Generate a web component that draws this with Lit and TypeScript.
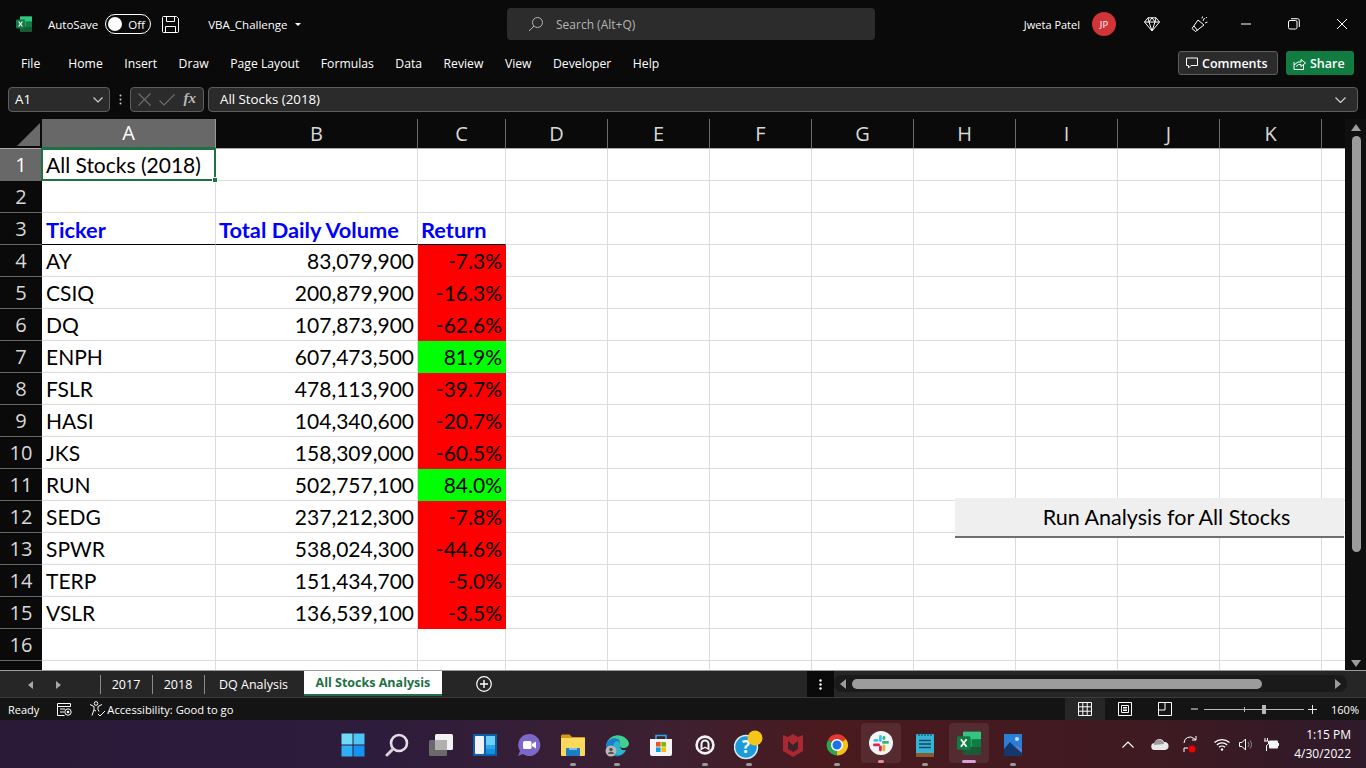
import { LitElement, html, css } from "lit";
import { customElement } from "lit/decorators.js";

const COLS = [
  ["A", 174], ["B", 202], ["C", 88], ["D", 102], ["E", 102], ["F", 102],
  ["G", 102], ["H", 102], ["I", 102], ["J", 102], ["K", 102], ["", 24],
] as const;

const ROWS: [string, string, string, "r" | "g"][] = [
  ["AY", "83,079,900", "-7.3%", "r"],
  ["CSIQ", "200,879,900", "-16.3%", "r"],
  ["DQ", "107,873,900", "-62.6%", "r"],
  ["ENPH", "607,473,500", "81.9%", "g"],
  ["FSLR", "478,113,900", "-39.7%", "r"],
  ["HASI", "104,340,600", "-20.7%", "r"],
  ["JKS", "158,309,000", "-60.5%", "r"],
  ["RUN", "502,757,100", "84.0%", "g"],
  ["SEDG", "237,212,300", "-7.8%", "r"],
  ["SPWR", "538,024,300", "-44.6%", "r"],
  ["TERP", "151,434,700", "-5.0%", "r"],
  ["VSLR", "136,539,100", "-3.5%", "r"],
];

const stroke = (w = 1) => `fill:none;stroke:currentColor;stroke-width:${w}`;

@customElement("app-root")
export class AppRoot extends LitElement {
  static styles = css`
    :host { display: block; width: 1366px; height: 768px; overflow: hidden; background: #0a0a0a; color: #fff; font-family: "Open Sans", "Noto Sans", sans-serif; }
    * { box-sizing: border-box; }
    svg { display: block; flex: none; }
    .title { height: 48px; display: flex; align-items: center; font-size: 11.5px; position: relative; }
    .autosave { margin-left: 16px; }
    .toggle { width: 46px; height: 20px; margin-left: 7px; border: 1px solid #fff; border-radius: 10px; display: flex; align-items: center; padding-left: 2px; gap: 6px; font-size: 11.5px; }
    .knob { width: 14px; height: 14px; border-radius: 50%; background: #fff; }
    .save { margin-left: 11px; }
    .docname { margin-left: 29px; display: flex; align-items: center; gap: 7px; }
    .caret { width: 0; height: 0; border: 3px solid transparent; border-top: 3px solid #fff; border-bottom: 0; }
    .search { position: absolute; left: 507px; top: 8px; width: 368px; height: 32px; background: #2c2c2c; border-radius: 4px; display: flex; align-items: center; padding-left: 21px; gap: 12px; color: #b4b4b4; font-size: 12px; }
    .title-right { margin-left: auto; display: flex; align-items: center; }
    .user { font-size: 11px; margin-right: 12px; }
    .avatar { width: 24px; height: 24px; border-radius: 50%; background: #d13438; font-size: 9.5px; display: flex; align-items: center; justify-content: center; margin-right: 28px; }
    .tr-ic { margin-right: 31px; }
    .tr-ic.last { margin-right: 30px; }
    .winbtns { display: flex; align-items: center; gap: 36px; margin-right: 18px; margin-left: 2px; }
    .ribbon { height: 30px; display: flex; align-items: center; font-size: 12.2px; padding-left: 21px; }
    .ribbon span { margin-right: 21.5px; }
    .ribbon .file { margin-right: 28px; }
    .ribbon-right { margin-left: auto; display: flex; gap: 8px; padding-right: 12px; }
    .rbtn { height: 24px; border-radius: 3px; display: flex; align-items: center; gap: 4px; font-size: 12.5px; font-weight: 600; }
    .rbtn span { margin: 0; }
    .comments { width: 100px; background: #2b2b2b; border: 1px solid #5e5e5e; padding-left: 7px; }
    .share { width: 68px; background: #107c41; padding-left: 7px; }
    .fbar { height: 25px; margin-top: 9px; display: flex; align-items: stretch; padding-left: 8px; font-size: 13.3px; margin-bottom: 7px; }
    .box { background: #2b2b2b; border: 1px solid #5e5e5e; border-radius: 4px; display: flex; align-items: center; }
    .box > span { padding-bottom: 2px; }
    .namebox { width: 102px; padding: 0 6px; justify-content: space-between; font-size: 13.3px; }
    .kebab { width: 20px; display: flex; align-items: center; justify-content: center; }
    .fx { width: 74px; padding: 0 7px; justify-content: space-between; color: #6e6e6e; }
    .fxlabel { font-family: "Liberation Serif", serif; font-style: italic; font-weight: 700; font-size: 15px; color: #b8b8b8; }
    .formula { margin-left: 4px; width: 1150px; padding: 0 11px; justify-content: space-between; }
    .sheetwrap { height: 552px; display: flex; border-bottom: 1px solid #9a9a9a; }
    .sheet { width: 1345px; overflow: hidden; position: relative; height: 551px; }
    .hdr { display: flex; height: 30px; background: #0a0a0a; border-bottom: 1px solid #a8a8a8; }
    .corner { width: 42px; flex: none; padding: 4px 0 0 17px; }
    .ch { flex: none; display: flex; align-items: center; justify-content: center; font-size: 20px; color: #d8d8d8; border-right: 1px solid #6a6a6a; padding-bottom: 1px; }
    .ch.sel { background: #686868; color: #fff; border-bottom: 2px solid #1e7145; margin-bottom: -1px; border-right-color: #9a9a9a; }
    .row { display: flex; height: 32px; }
    .rh { width: 42px; flex: none; background: #0a0a0a; color: #d8d8d8; font-size: 20px; display: flex; align-items: center; justify-content: center; border-bottom: 1px solid #666; }
    .rh.sel { background: #686868; color: #fff; }
    .cell { flex: none; background: #fff; border-right: 1px solid #dcdcdc; border-bottom: 1px solid #dcdcdc; color: #000; font-family: "Lato", "Liberation Sans", sans-serif; font-size: 21px; display: flex; align-items: center; padding: 0 3px; white-space: nowrap; position: relative; }
    .first { padding-left: 4px; }
    .num { justify-content: flex-end; }
    .head { color: #0000ff; font-weight: 700; font-size: 21.8px; border-bottom-color: #000; padding-top: 1px; }
    .red { background: #ff0000; border-color: #ff0000; }
    .green { background: #00ff00; border-color: #00ff00; }
    .selbox { position: absolute; z-index: 2; left: -1px; top: -1px; right: -1px; bottom: -1px; border: 2px solid #1e7145; }
    .handle { position: absolute; right: -4px; bottom: -4px; width: 6px; height: 6px; background: #1e7145; border: 1px solid #fff; box-sizing: content-box; width: 4px; height: 4px; }
    .shape { position: absolute; left: 955px; top: 379px; width: 389px; height: 40px; background: #efefef; border-bottom: 2px solid #6e6e6e; color: #000; font-family: "Lato", sans-serif; font-size: 21.5px; display: flex; align-items: center; justify-content: center; padding-left: 34px; z-index: 3; }
    .vscroll { width: 21px; background: #0f0f0f; display: flex; flex-direction: column; align-items: center; position: relative; }
    .thumbv { width: 9px; height: 416px; background: #9c9c9c; border-radius: 5px; margin-top: 5px; margin-left: 1px; }
    .arr { margin-top: 5px; }
    .arrd { margin-top: auto; margin-bottom: 3px; }
    .tabs { height: 27px; background: #262626; display: flex; align-items: stretch; font-size: 12.5px; border-bottom: 1px solid #3c3c3c; }
    .nav { width: 101px; display: flex; align-items: center; padding-left: 28px; gap: 23px; border-right: 1px solid #8a8a8a; margin: 4px 0 3px; flex: none; }
    .tab { display: flex; align-items: center; position: relative; }
    .tab.year { width: 52px; justify-content: center; padding-right: 2px; }
    .tab.sep::after { content: ""; position: absolute; right: 0; top: 4px; bottom: 3px; width: 1px; background: #8a8a8a; }
    .tab.dq { padding: 0 16px 0 14px; }
    .tab.active { background: #fff; color: #1e7145; font-weight: 700; padding: 0 11.500px; border-bottom: 2px solid #1e7145; margin-bottom: 1px; }
    .plus { margin-left: 34px; align-self: center; }
    .hwrap { margin-left: 315px; width: 27px; background: #0a0a0a; display: flex; align-items: center; justify-content: center; flex: none; }
    .htrack { flex: 1; margin: 4px 19px 5px 0; background: #1a1a1a; border-radius: 8px; display: flex; align-items: center; padding: 0 6px; }
    .thumbh { width: 410px; height: 10px; border-radius: 5px; background: #9c9c9c; margin-left: 6px; }
    .status { height: 22px; background: #141414; display: flex; align-items: center; font-size: 11px; padding-left: 8px; }
    .a11y { display: flex; align-items: center; margin-left: 17px; gap: 1px; font-size: 11.2px; }
    .status-right { margin-left: auto; display: flex; align-items: center; height: 100%; }
    .view { width: 40px; height: 100%; display: flex; align-items: center; justify-content: center; }
    .view.on { background: #262626; }
    .zoom { display: flex; align-items: center; margin-left: 6px; padding-right: 7px; gap: 5px; }
    .zoomplus { margin-left: -1px; }
    .slider { width: 100px; height: 1px; background: #b8b8b8; position: relative; }
    .slider i { position: absolute; left: 58px; top: -4px; width: 4px; height: 9px; background: #b8b8b8; }
    .slider b { position: absolute; left: 40px; top: -2px; width: 1px; height: 5px; background: #b8b8b8; }
    .pct { font-size: 11px; margin-left: 9px; }
    .task { height: 48px; background: linear-gradient(90deg, #2a1a38 0%, #2e1c3c 28%, #3e2030 50%, #4a1a1e 60%, #3e1a22 85%, #2e1a2a 100%); display: flex; align-items: center; position: relative; }
    .apps { display: flex; margin-left: 331px; }
    .app { width: 44px; height: 44px; margin-top: 2px; display: flex; align-items: center; justify-content: center; position: relative; border-radius: 4px; }
    .app.hov { background: rgba(255,255,255,.08); width: 40px; margin: 2px 2px 0; height: 40px; }
    .dot { position: absolute; bottom: 1px; left: 50%; margin-left: -3px; width: 6px; height: 3px; border-radius: 2px; background: #9a9a9a; }
    .app.hov .dot { bottom: 0; }
    .dot.pink { background: #e8899a; }
    .dot.lilac { width: 14px; margin-left: -7px; background: #d9a0e0; }
    .tray { margin-left: auto; display: flex; align-items: center; padding-right: 15px; }
    .clock { text-align: right; font-size: 12px; line-height: 19px; margin-left: 15px; }
  `;

  excel(s: number) {
    return html`<svg width=${s} height=${s} viewBox="0 0 16 16">
      <rect x="4" y="0.5" width="12" height="15" rx="1" fill="#21a366"/>
      <rect x="4" y="0.5" width="12" height="5" fill="#33c481"/>
      <rect x="4" y="10.5" width="12" height="5" fill="#185c37"/>
      <rect x="10" y="5.5" width="6" height="5" fill="#107c41"/>
      <rect x="0" y="3.5" width="9" height="9" rx="1" fill="#107c41"/>
      <path d="M2.6 5.5l3.8 5M6.4 5.5l-3.8 5" stroke="#fff" stroke-width="1.2" fill="none"/>
    </svg>`;
  }

  appIcon(i: number) {
    switch (i) {
      case 0: return html`<svg width="24" height="24" viewBox="0 0 24 24"><rect x="0.5" y="0.5" width="11" height="11" fill="#6fdcf7"/><rect x="12.5" y="0.5" width="11" height="11" fill="#4cc4f5"/><rect x="0.5" y="12.5" width="11" height="11" fill="#2fb0f5"/><rect x="12.5" y="12.5" width="11" height="11" fill="#1593f0"/></svg>`;
      case 1: return html`<svg width="24" height="24" viewBox="0 0 24 24"><circle cx="14" cy="10" r="8" fill="none" stroke="#e4dde6" stroke-width="2.6"/><path d="M8 16l-6 6" stroke="#d8d0da" stroke-width="3" stroke-linecap="round"/></svg>`;
      case 2: return html`<svg width="24" height="22" viewBox="0 0 24 22"><rect x="6" y="0" width="18" height="16" rx="1.5" fill="#f2f2f2"/><rect x="0" y="6" width="18" height="16" rx="1.5" fill="#6a6a6a"/><rect x="6" y="6" width="12" height="10" fill="#b0b0b0"/></svg>`;
      case 3: return html`<svg width="24" height="22" viewBox="0 0 24 22"><rect width="24" height="22" fill="#0f5ea8"/><rect x="2" y="2" width="9" height="18" rx="1" fill="#f2f2f2"/><rect x="13" y="2" width="9" height="9" fill="#6fd0f7"/><rect x="13" y="11" width="9" height="4" fill="#28a8ea"/><rect x="13" y="15" width="9" height="5" fill="#1490df"/></svg>`;
      case 4: return html`<svg width="24" height="24" viewBox="0 0 24 24"><path d="M12 1a11 11 0 1 1-6 20l-5 2 2-5a11 11 0 0 1 9-17z" fill="#7b68c8"/><rect x="6" y="8" width="8.5" height="8" rx="1.5" fill="#fff"/><path d="M15 11l4-2.5v7L15 13z" fill="#fff"/></svg>`;
      case 5: return html`<svg width="24" height="22" viewBox="0 0 24 22"><path d="M0 2a1.5 1.5 0 0 1 1.5-1.5h7L11 3h13v3H0z" fill="#d59a1a"/><rect x="0" y="4" width="24" height="18" rx="1" fill="#fbd95c"/><rect x="5" y="14" width="14" height="8" rx="1" fill="#1c7cc4"/><rect x="8" y="14" width="8" height="2" fill="#6fc3f0"/></svg>`;
      case 6: return html`<svg width="24" height="24" viewBox="0 0 24 24"><path d="M1 12a12 12 0 0 1 23-2c0 4-3 5-6 5-2 0-3-1-3-2 0-4-5-6-8-4-3 1-5 4-6 3z" fill="#3fcf8e"/><path d="M1 12c1-6 8-8 12-6 2 1 2 3 2 7 0 3 2 5 6 4-2 5-7 7-11 6-5-1-9-6-9-11z" fill="#1a7fd0"/><path d="M10 9c3-2 5 0 5 4 0 3 2 5 6 4-2 4-6 6-9 5-4-2-5-10-2-13z" fill="#2cb5c9"/><circle cx="6" cy="18" r="5.5" fill="#b8b8b8"/><circle cx="6" cy="16.5" r="1.8" fill="#555"/><path d="M3 21c0-3 6-3 6 0z" fill="#555"/></svg>`;
      case 7: return html`<svg width="24" height="24" viewBox="0 0 24 24"><path d="M7 6V2.5h10V6" fill="none" stroke="#28a8ea" stroke-width="1.6"/><path d="M1 6h22v15a2 2 0 0 1-2 2H3a2 2 0 0 1-2-2z" fill="#f4f4f4"/><rect x="7" y="9" width="4.6" height="4.6" fill="#f25022"/><rect x="12.4" y="9" width="4.6" height="4.6" fill="#7fba00"/><rect x="7" y="14.4" width="4.6" height="4.6" fill="#00a4ef"/><rect x="12.4" y="14.4" width="4.6" height="4.6" fill="#ffb900"/></svg>`;
      case 8: return html`<svg width="20" height="20" viewBox="0 0 20 20"><circle cx="10" cy="10" r="8.4" fill="none" stroke="#f2f2f2" stroke-width="2.6"/><path d="M5.5 15.500V9a4.5 4.5 0 0 1 9 0v6.500L10 13z" fill="#f2f2f2"/><path d="M7.500 13V9a2.500 2.500 0 0 1 5 0v4L10 11.500z" fill="#2e1c30"/></svg>`;
      case 9: return html`<svg width="30" height="30" viewBox="0 0 30 30"><circle cx="12" cy="17" r="11.500" fill="#1d9bd8" stroke="#d8eef8" stroke-width="1.5"/><text x="12" y="23" text-anchor="middle" font-size="17" font-weight="700" fill="#fff" font-family="Open Sans">?</text><circle cx="21" cy="8" r="7.500" fill="#f5c518"/></svg>`;
      case 10: return html`<svg width="22" height="24" viewBox="0 0 22 24"><path d="M1 2l5 2 5-3 5 3 5-2v16l-10 6-10-6z" fill="#a82a30"/><path d="M6 8l5 4 5-4v8l-5 3-5-3z" fill="#40202a"/></svg>`;
      case 11: return html`<svg width="24" height="24" viewBox="0 0 24 24"><path d="M12 12L3 7a10.400 10.400 0 0 1 18-1z" fill="#e33b2e"/><path d="M12 12l9-6a10.400 10.400 0 0 1-9 16.500z" fill="#f6c01c"/><path d="M12 12v10.500A10.400 10.400 0 0 1 3 7z" fill="#2da44e"/><circle cx="12" cy="12" r="5.300" fill="#1a73e8" stroke="#fff" stroke-width="1.500"/></svg>`;
      case 12: return html`<svg width="24" height="24" viewBox="0 0 24 24"><circle cx="12" cy="12" r="12" fill="#f4f4f4"/><rect x="10" y="4" width="2.800" height="7" rx="1.400" fill="#36c5f0"/><rect x="13" y="10" width="7" height="2.800" rx="1.400" fill="#2eb67d"/><rect x="4" y="12.500" width="7" height="2.800" rx="1.400" fill="#e01e5a"/><rect x="13.500" y="13.500" width="2.800" height="7" rx="1.400" fill="#ecb22e"/><rect x="10" y="14.500" width="2.800" height="6" rx="1.400" fill="#e01e5a"/><rect x="4.500" y="8" width="5" height="2.800" rx="1.400" fill="#36c5f0"/><rect x="13.500" y="5" width="2.800" height="4" rx="1.400" fill="#2eb67d"/></svg>`;
      case 13: return html`<svg width="18" height="24" viewBox="0 0 18 24"><rect x="0" y="1" width="18" height="23" rx="1" fill="#33b5d8"/><rect y="20" width="18" height="4" fill="#8a5a2a"/><path d="M3 0v3M6 0v3M9 0v3M12 0v3M15 0v3" stroke="#0f3a50" stroke-width="1"/><path d="M3 7.500h12M3 11h12M3 14.500h12" stroke="#0f4560" stroke-width="1.500"/></svg>`;
      case 14: return this.excel(24);
      default: return html`<svg width="18" height="22" viewBox="0 0 18 22"><rect width="18" height="22" fill="#2a7fd8"/><circle cx="13" cy="5" r="2" fill="#bfe4fa"/><path d="M0 15l6-7 5 5 3-2 4 4v7H0z" fill="#14386e"/><path d="M11 13l3-2 4 4v4z" fill="#5d7fd8"/></svg>`;
    }
  }

  render() {
    const dots: Record<number, string> = { 5: "", 6: "", 8: "", 9: "", 11: "", 12: "pink", 13: "", 14: "lilac", 15: "" };
    return html`
      <div class="title">
        <div style="margin-left:16px">${this.excel(16)}</div>
        <span class="autosave">AutoSave</span>
        <div class="toggle"><span class="knob"></span><span>Off</span></div>
        <svg class="save" width="17" height="17" viewBox="0 0 17 17" style="color:#fff"><path d="M1.500.5h13l2 2v13a1 1 0 0 1-1 1h-14a1 1 0 0 1-1-1v-14a1 1 0 0 1 1-1zM4.500.5v5h8v-5M3.500 16.500v-6h10v6" style=${stroke()}/></svg>
        <div class="docname"><span>VBA_Challenge</span><span class="caret"></span></div>
        <div class="search">
          <svg width="16" height="16" viewBox="0 0 16 16" style="color:#b4b4b4"><circle cx="9.500" cy="6.500" r="5" style=${stroke()}/><path d="M6 10l-5 5" style=${stroke()}/></svg>
          <span>Search (Alt+Q)</span>
        </div>
        <div class="title-right">
          <span class="user">Jweta Patel</span>
          <span class="avatar">JP</span>
          <svg class="tr-ic" width="16" height="15" viewBox="0 0 16 15" style="color:#fff"><path d="M4 .8h8l3.500 4.200L8 14 .5 5zM.5 5h15M5 5l3 9 3-9M4 .8L5 5l3-4.200L11 5l1-4.200" style=${stroke()}/></svg>
          <svg class="tr-ic last" width="17" height="17" viewBox="0 0 17 17" style="color:#fff"><path d="M1 12.500L7 4l6 5-8.500 6.500zM3 10l3.500 4.500M12 5l1.500-3M14 7l2.500-1M11 2.500l.5-2M15 2l1-.8" style=${stroke()}/></svg>
          <div class="winbtns">
            <svg width="12" height="12" viewBox="0 0 12 12" style="color:#fff"><path d="M1 6h10" style=${stroke()}/></svg>
            <svg width="12" height="12" viewBox="0 0 12 12" style="color:#fff"><rect x=".5" y="2.500" width="8.500" height="8.500" rx="1.500" style=${stroke()}/><path d="M3 .7h6.500a1.800 1.800 0 0 1 1.800 1.800V9" style=${stroke()}/></svg>
            <svg width="12" height="12" viewBox="0 0 12 12" style="color:#fff"><path d="M1 1l10 10M11 1L1 11" style=${stroke()}/></svg>
          </div>
        </div>
      </div>

      <div class="ribbon">
        <span class="file">File</span>
        ${["Home", "Insert", "Draw", "Page Layout", "Formulas", "Data", "Review", "View", "Developer", "Help"].map((t) => html`<span>${t}</span>`)}
        <div class="ribbon-right">
          <div class="rbtn comments">
            <svg width="12" height="12" viewBox="0 0 12 12" style="color:#fff"><path d="M.5 1h11v7.500H5L2.500 11V8.500h-2z" style=${stroke()}/></svg>
            <span>Comments</span>
          </div>
          <div class="rbtn share">
            <svg width="13" height="13" viewBox="0 0 13 13" style="color:#fff"><path d="M1 5v7.500h9.500V8M1 8l4-3h3V2.500l4.500 3.500L8 9.500V7.500H5.500L3 9.500" style=${stroke()}/></svg>
            <span>Share</span>
          </div>
        </div>
      </div>

      <div class="fbar">
        <div class="box namebox"><span>A1</span>
          <svg width="10" height="6" viewBox="0 0 10 6" style="color:#cfcfcf"><path d="M.5.500L5 5 9.500.500" style=${stroke(1.2)}/></svg>
        </div>
        <div class="kebab"><svg width="3" height="11" viewBox="0 0 3 11"><circle cx="1.500" cy="1.500" r="1" fill="#c8c8c8"/><circle cx="1.500" cy="5.500" r="1" fill="#c8c8c8"/><circle cx="1.500" cy="9.500" r="1" fill="#c8c8c8"/></svg></div>
        <div class="box fx">
          <svg width="13" height="13" viewBox="0 0 13 13"><path d="M.5.500l12 12M12.500.500l-12 12" style=${stroke(1.1)}/></svg>
          <svg width="16" height="12" viewBox="0 0 16 12"><path d="M.5 6.500L5 11 15.500.500" style=${stroke(1.1)}/></svg>
          <span class="fxlabel">fx</span>
        </div>
        <div class="box formula"><span>All Stocks (2018)</span>
          <svg width="11" height="6" viewBox="0 0 11 6" style="color:#cfcfcf"><path d="M.5.500l5 5 5-5" style=${stroke(1.2)}/></svg>
        </div>
      </div>

      <div class="sheetwrap">
        <div class="sheet">
          <div class="hdr">
            <div class="corner"><svg width="23" height="23" viewBox="0 0 23 23"><path d="M23 0v23H0z" fill="#6a6a6a"/></svg></div>
            ${COLS.map(([c, w], i) => html`<div class="ch ${i === 0 ? "sel" : ""}" style="width:${w}px">${c}</div>`)}
          </div>
          ${this.dataRow("1", ["All Stocks (2018)", "", ""], "title")}
          ${this.dataRow("2", ["", "", ""])}
          ${this.dataRow("3", ["Ticker", "Total Daily Volume", "Return"], "head")}
          ${ROWS.map((r, i) => this.dataRow(String(i + 4), [r[0], r[1], r[2]], r[3]))}
          ${this.dataRow("16", ["", "", ""])}
          ${this.dataRow("", ["", "", ""])}
          <div class="shape">Run Analysis for All Stocks</div>
        </div>
        <div class="vscroll">
          <svg class="arr" width="10" height="7" viewBox="0 0 10 7"><path d="M5 0l5 7H0z" fill="#9c9c9c"/></svg>
          <div class="thumbv"></div>
          <svg class="arrd" width="10" height="7" viewBox="0 0 10 7"><path d="M5 7l5-7H0z" fill="#9c9c9c"/></svg>
        </div>
      </div>

      <div class="tabs">
        <div class="nav">
          <svg width="5" height="8" viewBox="0 0 5 8"><path d="M5 0v8L0 4z" fill="#a8a8a8"/></svg>
          <svg width="5" height="8" viewBox="0 0 5 8"><path d="M0 0v8l5-4z" fill="#a8a8a8"/></svg>
        </div>
        <div class="tab sep year">2017</div>
        <div class="tab sep year">2018</div>
        <div class="tab dq">DQ Analysis</div>
        <div class="tab active">All Stocks Analysis</div>
        <svg class="plus" width="16" height="16" viewBox="0 0 16 16" style="color:#fff"><circle cx="8" cy="8" r="7.300" style=${stroke(1.2)}/><path d="M8 4v8M4 8h8" style=${stroke(1.4)}/></svg>
        <div class="hwrap"><svg width="3" height="11" viewBox="0 0 3 11"><circle cx="1.500" cy="1.500" r="1.200" fill="#fff"/><circle cx="1.500" cy="5.500" r="1.200" fill="#fff"/><circle cx="1.500" cy="9.500" r="1.200" fill="#fff"/></svg></div>
        <div class="htrack">
          <svg width="6" height="10" viewBox="0 0 6 10"><path d="M6 0v10L0 5z" fill="#9c9c9c"/></svg>
          <div class="thumbh"></div>
          <svg style="margin-left:auto" width="6" height="10" viewBox="0 0 6 10"><path d="M0 0v10l6-5z" fill="#9c9c9c"/></svg>
        </div>
      </div>

      <div class="status">
        <span>Ready</span>
        <svg style="margin-left:18px" width="15" height="13" viewBox="0 0 15 13" color="#fff"><path d="M.5.500h13v3H.5zM.5 3.500v9h7M3 6h5M3 9h4" style=${stroke()}/><circle cx="11" cy="9" r="3.200" style=${stroke()}/><circle cx="11" cy="9" r="1.300" fill="#fff"/></svg>
        <div class="a11y">
          <svg width="17" height="16" viewBox="0 0 17 16" color="#fff"><circle cx="7" cy="2.500" r="1.800" style=${stroke()}/><path d="M1 3.500l4 2v3l-2 6M13 3.500l-4 2v3l1 2M5 9l2 1M9 13l2 2 5-5" style=${stroke()}/></svg>
          <span>Accessibility: Good to go</span>
        </div>
        <div class="status-right">
          <div class="view on"><svg width="14" height="14" viewBox="0 0 14 14" color="#fff"><path d="M.5.500h13v13H.5zM.5 4.800h13M.5 9.200h13M4.800.500v13M9.200.500v13" style=${stroke()}/></svg></div>
          <div class="view"><svg width="14" height="14" viewBox="0 0 14 14" color="#fff"><path d="M.5.500h13v13H.5zM3.500 3.500h7v7h-7zM5 5.500h4M5 7h4M5 8.500h4" style=${stroke()}/></svg></div>
          <div class="view"><svg width="14" height="14" viewBox="0 0 14 14" color="#fff"><path d="M.5.500h13v13H.5zM.5 8h6.500V.500" style=${stroke()}/></svg></div>
          <div class="zoom">
            <svg width="8" height="8" viewBox="0 0 8 8" color="#e8e8e8"><path d="M0 4h7" style=${stroke()}/></svg>
            <div class="slider"><b></b><i></i></div>
            <svg class="zoomplus" width="9" height="9" viewBox="0 0 9 9" color="#e8e8e8"><path d="M0 4.500h9M4.500 0v9" style=${stroke()}/></svg>
            <span class="pct">160%</span>
          </div>
        </div>
      </div>

      <div class="task">
        <div class="apps">
          ${Array.from({ length: 16 }, (_, i) => html`
            <div class="app ${i === 12 || i === 14 ? "hov" : ""}">
              ${this.appIcon(i)}
              ${i in dots ? html`<span class="dot ${dots[i]}"></span>` : ""}
            </div>`)}
        </div>
        <div class="tray">
          <svg width="12" height="7" viewBox="0 0 12 7" color="#fff"><path d="M.5 6.500L6 1l5.500 5.500" style=${stroke(1.2)}/></svg>
          <svg style="margin-left:17px" width="18" height="12" viewBox="0 0 18 12"><path d="M4 12a3.500 3.500 0 0 1-.5-7A5 5 0 0 1 13 4a4 4 0 0 1 1 8z" fill="#e8e8e8"/><path d="M3 7a5 5 0 0 1 10-1" fill="#9a9a9a"/></svg>
          <svg style="margin-left:12px" width="18" height="18" viewBox="0 0 18 18" color="#fff"><path d="M3 8a6 6 0 0 1 10-4.500L15 5M15 1v4h-4M3 13v4M3 13h4" style=${stroke()}/><circle cx="11" cy="14" r="3.500" fill="#f00000"/></svg>
          <svg style="margin-left:15px" width="16" height="13" viewBox="0 0 16 13" color="#fff"><path d="M.5 4.500a11 11 0 0 1 15 0M2.800 7a7.500 7.500 0 0 1 10.400 0M5 9.300a4.300 4.300 0 0 1 6 0" style=${stroke(1.2)}/><circle cx="8" cy="11.500" r="1.200" fill="#fff"/></svg>
          <svg style="margin-left:9px" width="15" height="13" viewBox="0 0 15 13" color="#fff"><path d="M.5 4.500h2.500L6.500 1v11L3 8.500H.5z" style=${stroke()}/><path d="M9 4a3.500 3.500 0 0 1 0 5M11 2.500a6 6 0 0 1 0 8" style="fill:none;stroke:#8c8c8c;stroke-width:1"/></svg>
          <svg style="margin-left:10px" width="15" height="13" viewBox="0 0 15 13"><rect x="5" y="2.500" width="9" height="8" rx="1" fill="#f4f4f4"/><rect x="13.500" y="5" width="1.500" height="3" fill="#f4f4f4"/><path d="M1 0v3M3.500 0v3M0 3h4.500v3L2.500 7.500V13" stroke="#fff" fill="none"/></svg>
          <div class="clock"><div>1:15 PM</div><div>4/30/2022</div></div>
        </div>
      </div>
    `;
  }

  dataRow(n: string, v: [string, string, string], kind = "") {
    const selTitle = kind === "title";
    const head = kind === "head" ? "head" : "";
    const fill = kind === "r" ? "red" : kind === "g" ? "green" : "";
    const numB = kind === "r" || kind === "g";
    return html`<div class="row">
      <div class="rh ${selTitle ? "sel" : ""}">${n}</div>
      <div class="cell first ${head}" style="width:174px">${v[0]}${selTitle ? html`<span class="selbox"><span class="handle"></span></span>` : ""}</div>
      <div class="cell ${head} ${numB ? "num" : ""}" style="width:202px">${v[1]}</div>
      <div class="cell ${head} ${fill} ${numB ? "num" : ""}" style="width:88px">${v[2]}</div>
      ${COLS.slice(3).map(([, w]) => html`<div class="cell" style="width:${w}px"></div>`)}
    </div>`;
  }
}
